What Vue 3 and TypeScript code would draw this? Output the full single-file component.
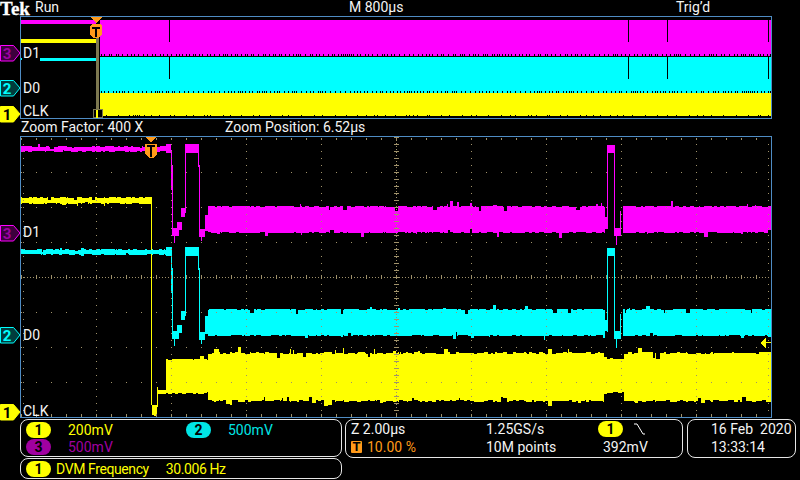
<script setup lang="ts">
type Badge = { n: string; y: number; stroke: string; fill: string; ink: string };

let seed = 73921;
const rnd = (): number => {
  seed = (seed + 0x6d2b79f5) | 0;
  let t = Math.imul(seed ^ (seed >>> 15), 1 | seed);
  t = (t + Math.imul(t ^ (t >>> 7), 61 | t)) ^ t;
  return ((t ^ (t >>> 14)) >>> 0) / 4294967296;
};

const rect = (x: number, y: number, w: number, h: number): string =>
  `M${x} ${y}h${w}v${h}h${-w}z`;

// a noisy filled envelope between two levels, drawn column by column
const band = (x0: number, x1: number, top: number, bot: number, spike = 5, jitter = 2): string => {
  let d = '';
  let x = x0;
  while (x < x1) {
    const w = Math.min(1 + Math.floor(rnd() * 4), x1 - x);
    const up = rnd() < 0.07 ? rnd() * spike : rnd() * jitter;
    const dn = rnd() < 0.07 ? rnd() * spike : rnd() * jitter;
    const t = Math.round(top - up + (rnd() < 0.03 ? spike * 0.7 : 0));
    const b = Math.round(bot + dn - (rnd() < 0.03 ? spike * 0.5 : 0));
    d += rect(x, t, w, b - t);
    x += w;
  }
  return d;
};

const digital = (o: number, firstBlockEnd: number): string => {
  let d = band(21, 167, 147 + o, 151 + o, 3, 1);
  d += rect(166, 144 + o, firstBlockEnd - 166, 9);
  d += rect(171, 150 + o, 1, 40) + rect(172, 165 + o, 1, 64);
  d += rect(172, 228 + o, 7, 8) + rect(174, 236 + o, 1, 7);
  d += rect(177, 222 + o, 5, 8) + rect(181, 208 + o, 4, 9);
  d += rect(185, 153 + o, 1, 60);
  d += rect(185, 144 + o, 14, 9);
  d += rect(198, 153 + o, 1, 14) + rect(199, 165 + o, 1, 66);
  d += rect(199, 229 + o, 6, 8) + rect(201, 237 + o, 1, 4);
  d += band(205, 209, 215 + o, 230 + o, 3);
  d += band(208, 605, 207 + o, 232 + o, 6, 1.5);
  d += band(605, 608, 217 + o, 228 + o, 2, 1);
  d += rect(607, 153 + o, 1, 66) + rect(614, 153 + o, 1, 80);
  d += rect(607, 145 + o, 8, 8);
  d += rect(614, 228 + o, 7, 8) + rect(616, 236 + o, 1, 9);
  d += rect(620, 211 + o, 1, 20);
  d += band(623, 771, 207 + o, 232 + o, 6, 1.5);
  return d;
};

const magenta = digital(0, 171);
const cyan = digital(103, 172);

const yellow =
  band(21, 152, 198, 203, 3, 1) +
  rect(151, 200, 1, 205) +
  rect(152, 405, 5, 10) +
  rect(154, 415, 2, 1) +
  rect(157, 387, 1, 20) +
  rect(158, 390, 8, 4) +
  band(166, 208, 360, 393, 5, 1.5) +
  band(208, 604, 354, 400, 7, 2) +
  band(604, 624, 359, 392, 2, 1) +
  band(624, 771, 354, 400, 7, 2);

// graticule: dots every 15px on rows, every 7px on columns
let dots = '';
const rows = [172, 207, 242, 312, 347, 382];
for (const y of rows) for (let x = 21; x < 771; x += 15) dots += rect(x, y, 1, 1);
for (let k = 1; k < 10; k++) {
  const x = 21 + 75 * k;
  for (let y = 144; y < 417; y += 7) dots += rect(x, y, 1, 1);
}
for (let y = 144; y < 417; y += 7) dots += rect(23, y, 1, 1) + rect(768, y, 1, 1);
for (let x = 21; x < 771; x += 15) dots += rect(x, 138, 1, 2) + rect(x, 414, 1, 3);
for (let x = 21; x < 771; x += 3) dots += rect(x, 277, 1, 1);
for (let x = 21; x < 771; x += 15) dots += rect(x, 275, 1, 4);
for (let y = 137; y < 417; y += 3) dots += rect(396, y, 1, 1);
for (let y = 137; y < 417; y += 7) dots += rect(394, y, 5, 1);
const grid = dots;

// overview acquisition strip
const specks = (y: number, h: number, n: number): string => {
  let d = '';
  for (let x = 101; x < 771; x += 2 + Math.floor(rnd() * n)) d += rect(x, y, 1, h);
  return d;
};
const overviewCuts =
  specks(54, 2, 4) +
  specks(91, 2, 4) +
  specks(115, 1, 12) +
  [169, 628, 667, 768].map((x) => rect(x, 20, 1, 22) + rect(x, 57, 1, 22)).join('');

const overviewBadges: Badge[] = [
  { n: '3', y: 45, stroke: '#ff00ff', fill: '#3c003c', ink: '#a000a0' },
  { n: '2', y: 80, stroke: '#00ffff', fill: '#003c3c', ink: '#00ffff' },
  { n: '1', y: 106, stroke: '#ffff00', fill: '#ffff00', ink: '#000000' }
];
const mainBadges: Badge[] = [
  { n: '3', y: 225, stroke: '#ff00ff', fill: '#3c003c', ink: '#a000a0' },
  { n: '2', y: 327, stroke: '#00ffff', fill: '#003c3c', ink: '#00ffff' },
  { n: '1', y: 404, stroke: '#ffff00', fill: '#ffff00', ink: '#000000' }
];
const allBadges = [...overviewBadges, ...mainBadges];
</script>

<template>
  <div class="scope">
    <header class="status">
      <span class="logo">Tek</span>
      <span class="run">Run</span>
      <span class="mid">M 800µs</span>
      <span class="trig">Trig’d</span>
    </header>

    <section class="plot overview">
      <svg class="trace" width="750" height="101" viewBox="21 17 750 101" shape-rendering="crispEdges">
        <path :d="'M21 20h75v4h-75z'" fill="#ff00ff" />
        <path :d="'M21 39h75v4h-75z'" fill="#ffff00" />
        <path :d="'M40 58h56v3h-56zM21 58h1v2h-1z'" fill="#00ffff" />
        <path :d="'M100 20h671v36h-671z'" fill="#ff00ff" />
        <path :d="'M100 57h671v36h-671z'" fill="#00ffff" />
        <path :d="'M100 93h671v23h-671z'" fill="#ffff00" />
        <path :d="overviewCuts" fill="#000" />
        <path :d="'M96 38h3v72h-3z'" fill="#7d7850" />
        <path :d="'M93 109h9v8h-9z'" fill="#000" stroke="#7d7850" />
        <path :d="'M96 110h2v9h-2z'" fill="#ffff00" />
        <path :d="'M90 17h12l-6 6z'" fill="#ff9a1a" />
        <path :d="'M90 26l2-2h8l2 2v9l-4 3h-4l-4-3z'" fill="#ff9a1a" />
        <path :d="'M92 27h8v2h-3v8h-2v-8h-3z'" fill="#000" />
      </svg>
      <span class="tag t1">D1</span>
      <span class="tag t2">D0</span>
      <span class="tag t3">CLK</span>
    </section>

    <div class="zoomline">
      <span class="zf">Zoom Factor: 400 X</span>
      <span>Zoom Position: 6.52µs</span>
    </div>

    <section class="plot main">
      <svg class="trace" width="750" height="280" viewBox="21 137 750 280" shape-rendering="crispEdges">
        <path :d="yellow" fill="#ffff00" />
        <path :d="magenta" fill="#ff00ff" />
        <path :d="cyan" fill="#00ffff" />
        <path :d="grid" fill="#a0926a" />
        <path :d="'M145 137h12l-6 5z'" fill="#ff9a1a" />
        <path :d="'M145 144h12v10l-4 4h-4l-4-4z'" fill="#ff9a1a" />
        <path :d="'M147 145h8v2h-3v10h-2v-10h-3z'" fill="#000" />
        <path :d="'M760 343l6-5v4h5v1h-5v5z'" fill="#ffff00" />
      </svg>
      <span class="tag m1">D1</span>
      <span class="tag m2">D0</span>
      <span class="tag m3">CLK</span>
    </section>

    <svg class="badges" width="21" height="480" viewBox="0 0 21 480">
      <g v-for="(b, i) in allBadges" :key="i" :transform="`translate(0 ${b.y})`">
        <path d="M0.5 0.5h13l6.5 7.5l-6.5 8h-13z" :fill="b.fill" :stroke="b.stroke" />
        <text x="7" y="13.5" text-anchor="middle" class="badgeText" :fill="b.ink">{{ b.n }}</text>
      </g>
    </svg>

    <footer class="readouts">
      <div class="box channels">
        <span class="pill yellow">1</span><span class="v cy">200mV</span>
        <span class="pill aqua">2</span><span class="v ca">500mV</span>
        <span class="pill purple">3</span><span class="v cp">500mV</span>
      </div>
      <div class="box timing">
        <div class="tcol">
          <span>Z 2.00µs</span>
          <span class="orange"><b class="tbox">T</b>10.00 %</span>
        </div>
        <div class="tcol rate">
          <span>1.25GS/s</span>
          <span>10M points</span>
        </div>
        <div class="tcol trigc">
          <span class="trigrow">
            <span class="pill yellow">1</span>
            <svg width="12" height="12" viewBox="0 0 12 12"><path d="M1 1h3l6 10h2" fill="none" stroke="#fff" /></svg>
          </span>
          <span class="lvl">392mV</span>
        </div>
      </div>
      <div class="box clock">
        <span>16 Feb&nbsp; 2020</span>
        <span>13:33:14</span>
      </div>
      <div class="box dvm">
        <span class="pill yellow">1</span>
        <span class="dvmtext">DVM Frequency</span>
        <span class="dvmtext">30.006 Hz</span>
      </div>
    </footer>
  </div>
</template>

<style>
html,
body {
  margin: 0;
  background: #000;
}
</style>

<style scoped>
.scope {
  position: relative;
  width: 800px;
  height: 480px;
  overflow: hidden;
  background: #000;
  color: #f4f4f4;
  font-family: Roboto, 'Liberation Sans', sans-serif;
  font-size: 14px;
  line-height: 16px;
  display: flex;
  flex-direction: column;
  padding-left: 20px;
  box-sizing: border-box;
}
.status {
  height: 16px;
  display: grid;
  grid-template-columns: 314px 327px 1fr;
  margin-left: -20px;
  padding-left: 35px;
  position: relative;
  line-height: 15px;
}
.logo {
  position: absolute;
  left: 0;
  top: 1px;
  font: bold 19px/15px 'Liberation Serif', serif;
  -webkit-text-stroke: 0.3px #fff;
  color: #fff;
}
.mid,
.trig {
  white-space: nowrap;
}
.run {
  grid-column: 1;
}
.plot {
  position: relative;
  width: 750px;
  border: 1px solid #4f8cc4;
  background: #000;
}
.trace {
  display: block;
}
.overview {
  height: 101px;
}
.main {
  height: 280px;
}
.zoomline {
  height: 17px;
  display: flex;
  padding-left: 1px;
  white-space: nowrap;
}
.zf {
  width: 204px;
}
.tag {
  position: absolute;
  left: 2px;
  color: #f4f4f4;
  line-height: 14px;
}
.t1 {
  top: 29px;
}
.t2 {
  top: 64px;
}
.t3 {
  top: 87px;
}
.m1 {
  top: 88px;
}
.m2 {
  top: 191px;
}
.m3 {
  top: 267px;
}
.badges {
  position: absolute;
  left: 0;
  top: 0;
}
.badgeText {
  font: bold 15px Roboto, sans-serif;
}
.readouts {
  margin-top: 1px;
  display: grid;
  grid-template-columns: 323px 338px 111px;
  grid-template-rows: 38px 21px;
  column-gap: 2px;
  row-gap: 1px;
}
.box {
  box-sizing: border-box;
  border: 1px solid #e6e6e6;
  border-radius: 8px;
}
.channels {
  width: 322px;
  display: grid;
  grid-auto-rows: 17px;
  column-gap: 17px;
  align-items: center;
  padding: 1px 5px;
  align-content: start;
  grid-template-columns: 25px 101px 25px 1fr;
}
.pill {
  display: block;
  width: 25px;
  height: 16px;
  border-radius: 8px;
  text-align: center;
  color: #000;
  font-weight: bold;
  font-size: 14px;
  line-height: 16px;
}
.yellow {
  background: #ffff00;
}
.aqua {
  background: #00e5e5;
}
.purple {
  background: #a000a0;
}
.cy {
  color: #ffff00;
}
.ca {
  color: #00e5e5;
}
.cp {
  color: #a000a0;
}
.timing {
  grid-row: 1 / span 2;
  height: 39px;
  display: grid;
  grid-template-columns: 135px 112px 1fr;
  padding: 1px 0 0 5px;
}
.tcol {
  display: flex;
  flex-direction: column;
  gap: 2px;
}
.orange {
  color: #ff9a1a;
  display: flex;
  align-items: center;
  gap: 5px;
}
.tbox {
  width: 11px;
  height: 12px;
  background: #ff9a1a;
  color: #000;
  border-radius: 1px;
  font-size: 13px;
  line-height: 12px;
  text-align: center;
}
.trigrow {
  display: flex;
  align-items: center;
  gap: 10px;
}
.lvl {
  margin-left: 5px;
}
.clock {
  grid-row: 1 / span 2;
  height: 39px;
  margin-left: 2px;
  display: flex;
  flex-direction: column;
  gap: 2px;
  padding: 1px 0 0 23px;
  white-space: nowrap;
}
.dvm {
  width: 322px;
  grid-column: 1;
  grid-row: 2;
  display: flex;
  align-items: center;
  padding: 0 5px;
  height: 21px;
  color: #ffff00;
}
.dvmtext {
  margin-left: 5px;
  color: #ffff00;
  white-space: nowrap;
  letter-spacing: -0.4px;
}
.dvmtext + .dvmtext {
  margin-left: 17px;
}
</style>
